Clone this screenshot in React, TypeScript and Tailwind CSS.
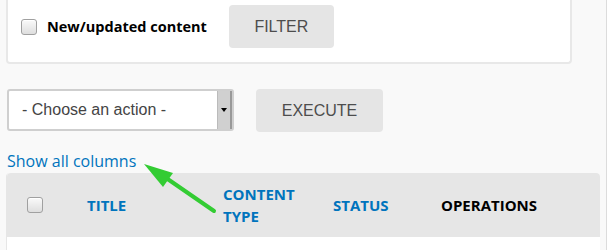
import React from 'react';

function Check() {
  return (
    <span className="inline-block h-[16px] w-[16px] shrink-0 rounded-[3px] border border-[#a0a0a0] bg-gradient-to-b from-[#fafafa] to-[#dedede] shadow-[inset_0_1px_0_#fff]" />
  );
}

function GrayButton({ label, className }: { label: string; className: string }) {
  return (
    <button
      className={`flex items-center justify-center rounded-[4px] bg-[#e5e5e5] text-[16px] text-[#4d4d4d] ${className}`}
      style={{ fontFamily: '"Liberation Sans", Arial, sans-serif' }}
    >
      {label}
    </button>
  );
}

export default function App() {
  const sans = { fontFamily: '"Open Sans", "Noto Sans", sans-serif' };

  return (
    <div className="relative h-[250px] w-[607px] overflow-hidden border-r border-[#dcdcdc] bg-[#f9f9f9]" style={sans}>
      {/* filter panel, its top is cut off */}
      <div className="ml-[6px] h-[64px] w-[566px] rounded-b-[4px] border-2 border-t-0 border-[#e8e8e8] bg-white pt-[5px]">
        <div className="flex h-[43px] items-center pl-[13px]">
          <Check />
          <span className="ml-[10px] text-[14.5px] font-bold text-black">New/updated content</span>
          <GrayButton label="FILTER" className="ml-[22px] h-[43px] w-[105px]" />
        </div>
      </div>

      {/* bulk actions */}
      <div className="mt-[25px] flex items-start pl-[7px]">
        <div
          className="flex h-[42px] w-[227px] rounded-[3px] border-2 border-[#cfcfcf] bg-white"
          style={{ fontFamily: '"Liberation Sans", Arial, sans-serif' }}
        >
          <span className="flex flex-1 items-center pl-[13px] text-[16px] text-[#444]">- Choose an action -</span>
          <span className="flex w-[15px] items-center justify-center border-l border-[#bbb] border-r-2 border-r-[#999] bg-[#d0d0d0]">
            <span className="h-0 w-0 border-x-[3px] border-t-[4px] border-x-transparent border-t-black" />
          </span>
        </div>
        <GrayButton label="EXECUTE" className="ml-[22px] h-[43px] w-[127px]" />
      </div>

      <a className="ml-[7px] mt-[18px] block text-[16px] leading-[22px] text-[#0074bd]">Show all columns</a>

      {/* table */}
      <div className="ml-[6px] mt-[1px] w-[594px] rounded-t-[4px] border-l border-[#e6e6e6] bg-white">
        <div className="grid h-[64px] grid-cols-[80px_136px_110px_108px_1fr] items-center rounded-t-[4px] bg-[#e6e6e6] text-[15px] font-bold leading-[22px]">
          <span className="flex pl-[20px]">
            <Check />
          </span>
          <span className="text-[#0074bd]">TITLE</span>
          <span className="text-[#0074bd]">
            CONTENT
            <br />
            TYPE
          </span>
          <span className="text-[#0074bd]">STATUS</span>
          <span className="text-black">OPERATIONS</span>
        </div>
        <div className="h-[20px]" />
      </div>

      {/* annotation arrow */}
      <svg className="pointer-events-none absolute left-0 top-0" width="607" height="250">
        <line x1="214" y1="211" x2="156" y2="171" stroke="#33cc33" strokeWidth="4" strokeLinecap="round" />
        <polygon points="144,164 173,173 163,187" fill="#33cc33" />
      </svg>
    </div>
  );
}
